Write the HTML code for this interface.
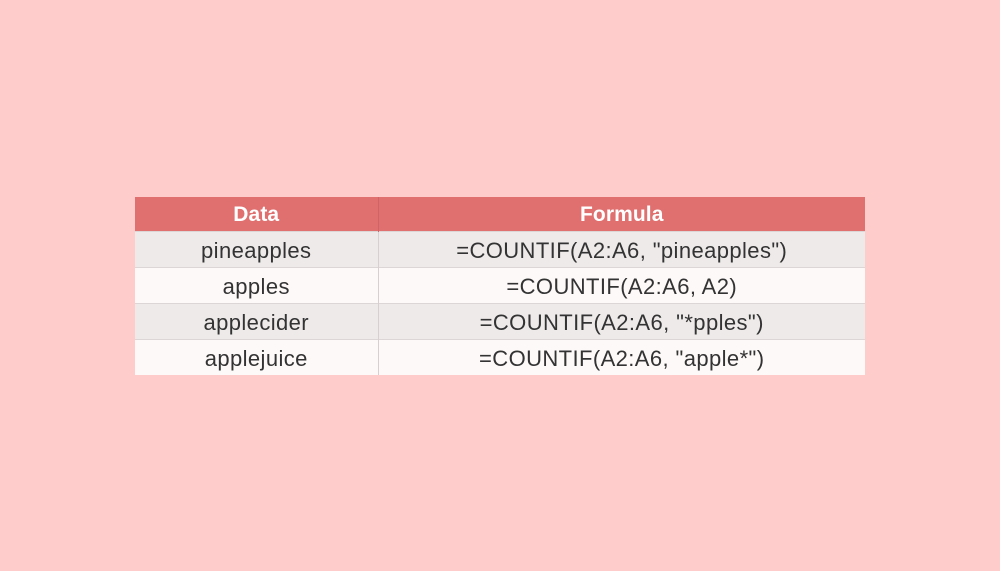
<!DOCTYPE html>
<html><head><style>
html,body{margin:0;padding:0;}
body{width:1000px;height:571px;background:#ffcccc;position:relative;font-family:"Liberation Sans",Arial,sans-serif;overflow:hidden;}
table{position:absolute;left:135px;top:197px;width:730px;border-collapse:collapse;}
td,th{text-align:center;padding:0;font-size:22px;color:#333;letter-spacing:0.4px;}
th{background:#e07070;color:#fff;font-weight:bold;height:34px;font-size:21px;padding-top:2px;box-sizing:border-box;letter-spacing:0.1px;}
td{height:36px;border-top:1px solid #dcd6d6;padding-top:3px;box-sizing:border-box;line-height:30px;}
tr.o td{background:#eeeaea;}
tr.e td{background:#fdf9f8;}
td:first-child,th:first-child{width:243px;border-right:1px solid #d8d0d0;}
th:first-child{border-right:1px solid #d06464;}
</style></head><body>
<table>
<tr><th>Data</th><th>Formula</th></tr>
<tr class="o"><td>pineapples</td><td>=COUNTIF(A2:A6, "pineapples")</td></tr>
<tr class="e"><td>apples</td><td>=COUNTIF(A2:A6, A2)</td></tr>
<tr class="o"><td>applecider</td><td>=COUNTIF(A2:A6, "*pples")</td></tr>
<tr class="e"><td>applejuice</td><td>=COUNTIF(A2:A6, "apple*")</td></tr>
</table>
</body></html>
